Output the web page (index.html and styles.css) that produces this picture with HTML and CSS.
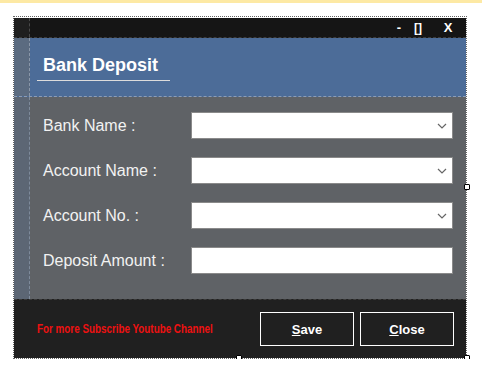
FILE: index.html
```html
<!DOCTYPE html>
<html lang="en">
<head>
    <meta charset="UTF-8">
    <meta name="viewport" content="width=device-width, initial-scale=1.0">
    <title>Bank Deposit</title>
    <link rel="stylesheet" href="styles.css">
</head>
<body>
    <div class="topbar"></div>
    <div class="designer">
        <div class="window">
            <div class="titlebar">
                <div class="gutter"></div>
                <div class="controls">
                    <span class="ctrl ctrl-min">-</span>
                    <span class="ctrl ctrl-max">[]</span>
                    <span class="ctrl ctrl-close">X</span>
                </div>
            </div>
            <div class="header">
                <div class="gutter"></div>
                <h1 class="title">Bank Deposit</h1>
            </div>
            <div class="body">
                <div class="gutter"></div>
                <form class="fields">
                    <label>Bank Name :</label>
                    <div class="combo">
                        <svg width="10" height="6" viewBox="0 0 10 6"><path d="M1 1 L5 5 L9 1" fill="none" stroke="#666" stroke-width="1.2"/></svg>
                    </div>
                    <label>Account Name :</label>
                    <div class="combo">
                        <svg width="10" height="6" viewBox="0 0 10 6"><path d="M1 1 L5 5 L9 1" fill="none" stroke="#666" stroke-width="1.2"/></svg>
                    </div>
                    <label>Account No. :</label>
                    <div class="combo">
                        <svg width="10" height="6" viewBox="0 0 10 6"><path d="M1 1 L5 5 L9 1" fill="none" stroke="#666" stroke-width="1.2"/></svg>
                    </div>
                    <label>Deposit Amount :</label>
                    <input type="text" class="textbox">
                </form>
            </div>
            <div class="footer">
                <span class="promo">For more Subscribe Youtube Channel</span>
                <div class="buttons">
                    <button type="button"><u>S</u>ave</button>
                    <button type="button"><u>C</u>lose</button>
                </div>
            </div>
        </div>
        <span class="handle handle-right"></span>
        <span class="handle handle-bottom"></span>
        <span class="handle handle-corner"></span>
    </div>
</body>
</html>
```

FILE: styles.css
```css
body {
    margin: 0;
    background: #fff;
    font-family: "Liberation Sans", Arial, sans-serif;
}
.topbar {
    height: 3px;
    background: #fde9a4;
}
.designer {
    position: relative;
    width: 452px;
    margin: 13px 0 0 13px;
    padding-top: 1px;
    border: 1px dotted #666;
}
.window {
    display: flex;
    flex-direction: column;
}
.gutter {
    width: 15px;
    flex: none;
}
.titlebar {
    display: flex;
    height: 19px;
    background: #151515;
    border-bottom: 1px dashed #3c3c3c;
}
.titlebar .gutter {
    background: #1f1f1f;
    border-right: 1px dashed #4a4a4a;
}
.controls {
    margin-left: auto;
    display: flex;
    align-items: center;
    padding-right: 8px;
    color: #fff;
    font-weight: bold;
    font-size: 13px;
}
.ctrl {
    width: 20px;
    text-align: center;
}
.ctrl-max {
    margin-left: -1px;
    font-size: 12px;
}
.ctrl-close {
    margin-left: 10px;
}
.header {
    display: flex;
    height: 58px;
    background: #4c6c98;
    border-bottom: 1px dashed #8c9db6;
}
.header .gutter {
    background: #5b6b80;
    border-right: 1px dashed #8a97a8;
}
.title {
    align-self: flex-start;
    margin: 16px 0 0 7px;
    padding: 0 12px 4px 6px;
    border-bottom: 1px solid #dcdcdc;
    color: #fff;
    font-size: 18px;
    line-height: 22px;
    font-weight: bold;
}
.body {
    display: flex;
    height: 202px;
    background: #5f6266;
}
.body .gutter {
    background: #5c6674;
    border-right: 1px dashed #7e8b9c;
}
.fields {
    display: grid;
    grid-template-columns: 148px 262px;
    grid-auto-rows: 27px;
    row-gap: 18px;
    align-items: center;
    margin: 0;
    padding: 15px 0 0 13px;
}
.fields label {
    color: #f2f2f2;
    font-size: 16px;
}
.combo,
.textbox {
    box-sizing: border-box;
    height: 27px;
    background: #fff;
    border: 1px solid #8a8a8a;
}
.combo {
    display: flex;
    align-items: center;
    justify-content: flex-end;
    padding-right: 5px;
}
.textbox {
    width: 262px;
    margin: 0;
    padding: 0 4px;
}
.footer {
    display: flex;
    align-items: center;
    height: 58px;
    padding: 0 12px 0 23px;
    background: #202020;
    border-top: 1px dashed #3a3a3a;
}
.promo {
    display: inline-block;
    white-space: nowrap;
    color: #ee1111;
    font-size: 12px;
    font-weight: bold;
    transform: scaleX(0.82);
    transform-origin: left center;
    width: 176px;
}
.buttons {
    margin-left: auto;
    display: flex;
    gap: 6px;
}
.buttons button {
    width: 94px;
    height: 34px;
    background: transparent;
    border: 1px solid #fff;
    color: #fff;
    font-family: "Liberation Sans", Arial, sans-serif;
    font-size: 13px;
    font-weight: bold;
    cursor: pointer;
}
.handle {
    position: absolute;
    width: 4px;
    height: 4px;
    background: #fff;
    border: 1px solid #000;
    border-radius: 1px;
}
.handle-right {
    left: 450px;
    top: 167px;
}
.handle-bottom {
    left: 222px;
    top: 338px;
}
.handle-corner {
    left: 450px;
    top: 338px;
}
```
